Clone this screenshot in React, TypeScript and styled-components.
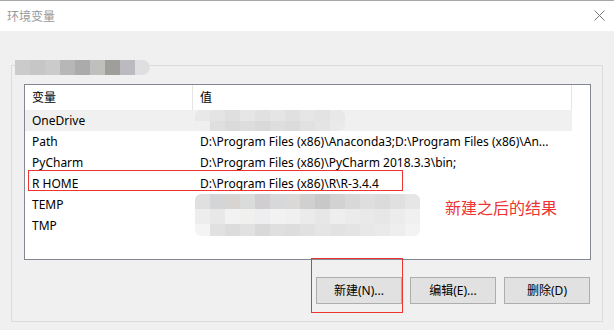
import React from "react";
import styled, { createGlobalStyle } from "styled-components";

const GlobalStyle = createGlobalStyle`
  html, body {
    margin: 0;
    padding: 0;
    background: #f0f0f0;
  }
  * {
    box-sizing: border-box;
  }
`;

const FONT = `"Noto Sans", "Noto Sans CJK SC", sans-serif`;

const Window = styled.div`
  position: relative;
  width: 614px;
  height: 330px;
  background: #f0f0f0;
  font-family: ${FONT};
  font-size: 12px;
  color: #000;
  overflow: hidden;
`;

const TitleBar = styled.div`
  height: 31px;
  background: #fff;
  border-top: 1px solid #a6a6a6;
  display: flex;
  align-items: center;
  justify-content: space-between;
  padding: 0 9px 1px 7px;
`;

const Title = styled.span`
  color: #999;
  font-size: 12px;
`;

const Body = styled.div`
  padding: 34px 11px 0 11px;
`;

const GroupBox = styled.div`
  position: relative;
  width: 592px;
  height: 257px;
  border: 1px solid #dcdcdc;
  padding: 18px 12px 0 12px;
  display: flex;
  flex-direction: column;
`;

const Legend = styled.div`
  position: absolute;
  left: 3px;
  top: -6px;
  display: flex;
  height: 15px;
  filter: blur(0.5px);
  border-radius: 0 8px 8px 0;
  overflow: hidden;
`;

const Block = styled.div<{ $c: string; $w?: number }>`
  width: ${(p) => p.$w ?? 15}px;
  height: 100%;
  background: ${(p) => p.$c};
`;

const ListBox = styled.div`
  width: 567px;
  height: 176px;
  border: 1px solid #828790;
  background: #fff;
  display: flex;
  flex-direction: column;
`;

const HeaderRow = styled.div`
  display: grid;
  grid-template-columns: 168px 379px 1fr;
  height: 25px;
`;

const HeaderCell = styled.div<{ $last?: boolean }>`
  padding-left: 7px;
  display: flex;
  align-items: center;
  border-right: ${(p) => (p.$last ? "none" : "1px solid #e5e5e5")};
  padding-bottom: 2px;
`;

const Row = styled.div`
  display: grid;
  grid-template-columns: 168px 379px 1fr;
  height: 21px;
`;

const Cell = styled.div<{ $selected?: boolean }>`
  padding-left: 7px;
  display: flex;
  align-items: center;
  white-space: nowrap;
  background: ${(p) => (p.$selected ? "#f0f0f0" : "transparent")};
  position: relative;
`;

const Mosaic = styled.div`
  position: absolute;
  left: 2px;
  top: 0;
  display: flex;
  flex-direction: column;
  filter: blur(0.7px);
  border-radius: 6px;
  overflow: hidden;
  z-index: 1;
`;

const MosaicRow = styled.div<{ $h: number }>`
  display: flex;
  height: ${(p) => p.$h}px;
`;

const ButtonRow = styled.div`
  display: flex;
  justify-content: flex-end;
  gap: 8px;
  margin-top: 17px;
`;

const Button = styled.button`
  width: 86px;
  height: 27px;
  background: #e1e1e1;
  border: 1px solid #adadad;
  font-family: ${FONT};
  font-size: 12px;
  color: #000;
  padding: 0 0 2px 0;
`;

const RedBox = styled.div<{ $x: number; $y: number; $w: number; $h: number }>`
  position: absolute;
  left: ${(p) => p.$x}px;
  top: ${(p) => p.$y}px;
  width: ${(p) => p.$w}px;
  height: ${(p) => p.$h}px;
  border: 1px solid #ee3333;
  pointer-events: none;
`;

const Note = styled.div`
  position: absolute;
  left: 445px;
  top: 196px;
  color: #ee3333;
  font-family: "Noto Sans CJK SC", sans-serif;
  font-size: 16px;
  line-height: 22px;
`;

const CloseIcon = () => (
  <svg width="11" height="11" viewBox="0 0 11 11">
    <path d="M0.5 0.5 L10.5 10.5 M10.5 0.5 L0.5 10.5" stroke="#7a7a7a" strokeWidth="1" fill="none" />
  </svg>
);

const legendColors = ["#cbcbcb", "#c6c6c6", "#cbcbcb", "#b7b7b7", "#ababab", "#bfbfbe", "#9f9e9a", "#babac0", "#dfdfe2"];

const oneDriveMosaic: [number, string[]][] = [
  [11, ["#e8e8e8", "#e4e4e4", "#dfdfdf", "#e6e6e6", "#e1e1e1", "#e5e5e5", "#e0e0e0", "#e6e6e6", "#e3e3e3", "#e8e8e8"]],
  [10, ["#efefef", "#dfdfdf", "#dadada", "#dddddd", "#d9d9d9", "#dedede", "#dbdbdb", "#e1e1e1", "#e4e4e4", "#eaeaea"]],
];

const tempMosaic: [number, string[]][] = [
  [15, ["#e0e0e0", "#d4d5d7", "#d7d4d2", "#dadbdb", "#d0ced1", "#d7d8da", "#dad9d7", "#d0d0d0", "#c9c8c8", "#d2d2d2", "#d8d8d8", "#dedede", "#dbdbdb", "#e0e0e0", "#e6e6e6"]],
  [15, ["#ededed", "#e8e8e8", "#f2f2f2", "#f0f0ef", "#eeeef0", "#f2f2f2", "#f0f0f0", "#ebebeb", "#e7e7e7", "#eeeeee", "#ebebeb", "#e9e9e9", "#e7e7e7", "#ececec", "#f0f0f0"]],
  [12, ["#f4f4f4", "#e1e1e1", "#dcdcdc", "#e0e1e0", "#dad9da", "#dfdfdf", "#dedddd", "#e1e1e1", "#e5e5e5", "#e2e2e2", "#e4e4e4", "#e8e8e8", "#eaeaea", "#eeeeee", "#f3f3f3"]],
];

const MosaicBlock = ({ rows }: { rows: [number, string[]][] }) => (
  <Mosaic>
    {rows.map(([h, colors], i) => (
      <MosaicRow key={i} $h={h}>
        {colors.map((c, j) => (
          <Block key={j} $c={c} />
        ))}
      </MosaicRow>
    ))}
  </Mosaic>
);

const rows = [
  { name: "OneDrive", value: "", selected: true, blur: "one" },
  { name: "Path", value: "D:\\Program Files (x86)\\Anaconda3;D:\\Program Files (x86)\\An..." },
  { name: "PyCharm", value: "D:\\Program Files (x86)\\PyCharm 2018.3.3\\bin;" },
  { name: "R HOME", value: "D:\\Program Files (x86)\\R\\R-3.4.4" },
  { name: "TEMP", value: "", blur: "temp" },
  { name: "TMP", value: "" },
];

const App: React.FC = () => {
  return (
    <>
      <GlobalStyle />
      <Window>
        <TitleBar>
          <Title>环境变量</Title>
          <CloseIcon />
        </TitleBar>
        <Body>
          <GroupBox>
            <Legend>
              {legendColors.map((c, i) => (
                <Block key={i} $c={c} />
              ))}
            </Legend>
            <ListBox>
              <HeaderRow>
                <HeaderCell>变量</HeaderCell>
                <HeaderCell>值</HeaderCell>
                <HeaderCell $last />
              </HeaderRow>
              {rows.map((r) => (
                <Row key={r.name}>
                  <Cell $selected={r.selected}>{r.name}</Cell>
                  <Cell $selected={r.selected}>
                    {r.blur === "one" && <MosaicBlock rows={oneDriveMosaic} />}
                    {r.blur === "temp" && <MosaicBlock rows={tempMosaic} />}
                    {r.value}
                  </Cell>
                  <Cell />
                </Row>
              ))}
            </ListBox>
            <ButtonRow>
              <Button>新建(N)...</Button>
              <Button>编辑(E)...</Button>
              <Button>删除(D)</Button>
            </ButtonRow>
          </GroupBox>
        </Body>
        <RedBox $x={28} $y={170} $w={375} $h={21} />
        <RedBox $x={311} $y={258} $w={92} $h={55} />
        <Note>新建之后的结果</Note>
      </Window>
    </>
  );
};

export default App;
